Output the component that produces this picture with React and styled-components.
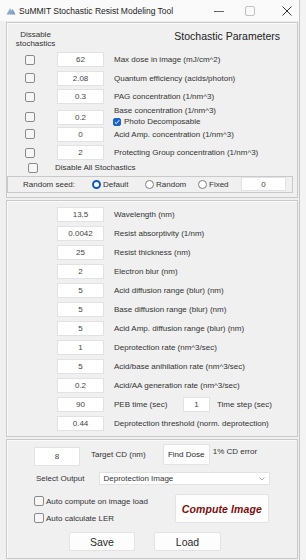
import React from "react";
import styled, { createGlobalStyle } from "styled-components";

const GlobalStyle = createGlobalStyle`
  html, body {
    margin: 0;
    padding: 0;
    background: #f3f3f3;
  }
  body {
    font-family: "Liberation Sans", Arial, sans-serif;
  }
`;

const Window = styled.div`
  width: 300px;
  height: 560px;
  box-sizing: border-box;
  background: #f0f0f0;
  border-right: 1px solid #c6c6c6;
  display: flex;
  flex-direction: column;
  overflow: hidden;
`;

const TitleBar = styled.div`
  height: 21px;
  flex: none;
  background: #fafafa;
  display: flex;
  align-items: center;
  padding-left: 6px;
  font-family: "Liberation Sans", Arial, sans-serif;
  font-size: 8.5px;
  color: #1c1c1c;
`;

const TitleText = styled.span`
  margin-left: 3px;
  white-space: nowrap;
`;

const WinButtons = styled.div`
  margin-left: auto;
  display: flex;
  align-items: center;
  gap: ${(p) => p.$gap || 22}px;
  padding-right: 7px;
`;

const Body = styled.div`
  flex: 1;
  display: flex;
  flex-direction: column;
  gap: 2px;
  padding: 1px 0 0 6px;
`;

const Frame = styled.div`
  width: 292px;
  height: ${(p) => p.$h}px;
  box-sizing: border-box;
  border: 1px solid #c9c9c9;
  box-shadow: inset 1px 1px 0 #fbfbfb;
  display: flex;
  flex-direction: column;
  padding: ${(p) => p.$pad || "0"};
`;

const Header = styled.div`
  display: flex;
  align-items: flex-start;
  padding-top: 7px;
  margin-bottom: 4px;
`;

const HeaderNote = styled.div`
  width: 57px;
  font-size: 8px;
  line-height: 9px;
  color: #333;
  text-align: center;
`;

const HeaderTitle = styled.div`
  margin-left: auto;
  padding-right: 17px;
  font-size: 10.5px;
  line-height: 12px;
  color: #222;
`;

const RowList = styled.div`
  display: flex;
  flex-direction: column;
  gap: ${(p) => p.$gap}px;
`;

const ParamRow = styled.div`
  display: grid;
  grid-template-columns: 50px 57px 1fr;
  height: 15px;
  align-items: center;
`;

const CheckCell = styled.div`
  display: flex;
  justify-content: center;
  padding-right: 4px;
`;

const NumInput = styled.input`
  width: ${(p) => p.$w || 47}px;
  height: ${(p) => p.$h || 15}px;
  box-sizing: border-box;
  border: 1px solid #e2e2e2;
  background: #fff;
  padding: 0;
  margin: 0;
  font-family: "Liberation Sans", Arial, sans-serif;
  font-size: 8px;
  color: #444;
  text-align: center;
  outline: none;
`;

const Label = styled.span`
  font-size: 8px;
  line-height: 9px;
  color: #333;
  white-space: nowrap;
`;

const StackCell = styled.div`
  display: flex;
  flex-direction: column;
  align-self: start;
  margin-top: -2px;
  gap: 2px;
`;

const InlineCheck = styled.label`
  display: flex;
  align-items: center;
  gap: ${(p) => p.$gap || 2}px;
  margin-left: ${(p) => p.$ml || 0}px;
`;

const CheckBox = styled.span`
  display: inline-flex;
  align-items: center;
  justify-content: center;
  flex: none;
  width: ${(p) => p.$size}px;
  height: ${(p) => p.$size}px;
  box-sizing: border-box;
  border: 1px solid ${(p) => (p.$checked ? "#1864c8" : "#8a8a8a")};
  background: ${(p) => (p.$checked ? "#1864c8" : "#f6f6f6")};
  border-radius: 2px;
`;

const PairCell = styled.div`
  display: flex;
  align-items: center;
`;

const DisableRow = styled.div`
  display: flex;
  align-items: center;
  height: 11px;
  margin-top: 2px;
  padding-left: 21px;
  gap: 17px;
`;

const SeedBox = styled.div`
  margin: 2.5px 4px 0 0;
  height: 17px;
  box-sizing: border-box;
  border: 1px solid #c9c9c9;
  display: grid;
  grid-template-columns: 69px 53px 53px 43px 45px;
  align-items: center;
  padding-left: 15px;
`;

const RadioItem = styled.label`
  display: flex;
  align-items: center;
  gap: 2px;
`;

const Radio = styled.span`
  width: 9px;
  height: 9px;
  box-sizing: border-box;
  border-radius: 50%;
  background: #fff;
  border: ${(p) => (p.$on ? "2.5px solid #0a5cc2" : "1px solid #7e7e7e")};
`;

const Row = styled.div`
  display: flex;
  align-items: ${(p) => p.$align || "center"};
  height: ${(p) => p.$h}px;
  margin-top: ${(p) => p.$mt || 0}px;
  padding-left: ${(p) => p.$pl || 0}px;
  gap: ${(p) => p.$gap || 0}px;
`;

const Nudge = styled.div`
  display: flex;
  margin-top: ${(p) => p.$mt || 0}px;
  margin-left: ${(p) => p.$ml || 0}px;
`;

const Button = styled.div`
  width: ${(p) => p.$w}px;
  height: ${(p) => p.$h}px;
  box-sizing: border-box;
  background: #fdfdfd;
  border: 1px solid #e3e3e3;
  border-radius: 2px;
  display: flex;
  align-items: center;
  justify-content: center;
  font-size: ${(p) => p.$fs || 8}px;
  color: #2a2a2a;
  margin-left: ${(p) => p.$ml || 0}px;
  flex: none;
`;

const ComputeButton = styled(Button)`
  font-weight: bold;
  font-style: italic;
  color: #7c0d0d;
  letter-spacing: 0.1px;
`;

const Dropdown = styled.div`
  width: 171px;
  height: 13px;
  box-sizing: border-box;
  margin-left: 15px;
  background: #fff;
  border: 1px solid #e2e2e2;
  display: flex;
  align-items: center;
  justify-content: space-between;
  padding: 0 4px 0 3px;
  font-size: 8px;
  color: #333;
`;

const CheckColumn = styled.div`
  display: flex;
  flex-direction: column;
  gap: 7px;
  margin-top: 2px;
`;

const Check = ({ checked, size = 10 }) => (
  <CheckBox $checked={checked} $size={size}>
    {checked && (
      <svg width="6" height="6" viewBox="0 0 8 8">
        <path d="M1 4.2 L3.1 6.2 L7 1.6" fill="none" stroke="#fff" strokeWidth="1.3" />
      </svg>
    )}
  </CheckBox>
);

const stochRows = [
  ["62", "Max dose in image (mJ/cm^2)"],
  ["2.08", "Quantum efficiency (acids/photon)"],
  ["0.3", "PAG concentration (1/nm^3)"],
  ["0.2", "Base concentration (1/nm^3)", true],
  ["0", "Acid Amp. concentration (1/nm^3)"],
  ["2", "Protecting Group concentration (1/nm^3)"],
];

const physRows = [
  ["13.5", "Wavelength (nm)"],
  ["0.0042", "Resist absorptivity (1/nm)"],
  ["25", "Resist thickness (nm)"],
  ["2", "Electron blur (nm)"],
  ["5", "Acid diffusion range (blur) (nm)"],
  ["5", "Base diffusion range (blur) (nm)"],
  ["5", "Acid Amp. diffusion range (blur) (nm)"],
  ["1", "Deprotection rate (nm^3/sec)"],
  ["5", "Acid/base anihilation rate (nm^3/sec)"],
  ["0.2", "Acid/AA generation rate (nm^3/sec)"],
  ["90", "PEB time (sec)", "peb"],
  ["0.44", "Deprotection threshold (norm. deprotection)"],
];

const AppIcon = () => (
  <svg width="10" height="9" viewBox="0 0 10 9">
    <defs>
      <linearGradient id="ic" x1="0" y1="0" x2="1" y2="1">
        <stop offset="0" stopColor="#a9c4e0" />
        <stop offset="1" stopColor="#6f93b8" />
      </linearGradient>
    </defs>
    <path d="M0.5 8.5 L4 2 L5.5 4.5 L6.8 2.8 L9.5 8.5 Z" fill="url(#ic)" />
  </svg>
);

export default function App() {
  return (
    <>
      <GlobalStyle />
      <Window>
        <TitleBar>
          <AppIcon />
          <TitleText>SuMMIT Stochastic Resist Modeling Tool</TitleText>
          <WinButtons $gap={21}>
            <svg width="10" height="10" viewBox="0 0 10 10">
              <line x1="0" y1="5.5" x2="10" y2="5.5" stroke="#666" strokeWidth="1" />
            </svg>
            <svg width="10" height="10" viewBox="0 0 10 10">
              <rect x="0.5" y="0.5" width="9" height="9" rx="1.5" fill="none" stroke="#c2c2c2" strokeWidth="1" />
            </svg>
            <svg width="10" height="10" viewBox="0 0 10 10" style={{ marginLeft: 6 }}>
              <path d="M0.5 0.5 L9.5 9.5 M9.5 0.5 L0.5 9.5" stroke="#333" strokeWidth="1" />
            </svg>
          </WinButtons>
        </TitleBar>

        <Body>
          <Frame $h={176}>
            <Header>
              <HeaderNote>
                Dissable
                <br />
                stochastics
              </HeaderNote>
              <HeaderTitle>Stochastic Parameters</HeaderTitle>
            </Header>
            <RowList $gap={3.7}>
              {stochRows.map(([v, text, photo]) => (
                <ParamRow key={text}>
                  <CheckCell>
                    <Check />
                  </CheckCell>
                  <NumInput value={v} readOnly />
                  {photo ? (
                    <StackCell>
                      <Label>{text}</Label>
                      <InlineCheck $ml={-1} $gap={3}>
                        <Check checked size={8} />
                        <Label>Photo Decomposable</Label>
                      </InlineCheck>
                    </StackCell>
                  ) : (
                    <Label>{text}</Label>
                  )}
                </ParamRow>
              ))}
            </RowList>
            <DisableRow>
              <Check />
              <Label>Disable All Stochastics</Label>
            </DisableRow>
            <SeedBox>
              <Label>Random seed:</Label>
              <RadioItem>
                <Radio $on />
                <Label>Default</Label>
              </RadioItem>
              <RadioItem>
                <Radio />
                <Label>Random</Label>
              </RadioItem>
              <RadioItem>
                <Radio />
                <Label>Fixed</Label>
              </RadioItem>
              <NumInput value="0" readOnly $w={45} $h={14} />
            </SeedBox>
          </Frame>

          <Frame $h={237} $pad="6px 0 0 0">
            <RowList $gap={4}>
              {physRows.map(([v, text, peb]) => (
                <ParamRow key={text}>
                  <span />
                  <NumInput value={v} readOnly />
                  {peb ? (
                    <PairCell>
                      <Label style={{ width: 69 }}>{text}</Label>
                      <NumInput value="1" readOnly $w={27} />
                      <Label style={{ marginLeft: 7 }}>Time step (sec)</Label>
                    </PairCell>
                  ) : (
                    <Label>{text}</Label>
                  )}
                </ParamRow>
              ))}
            </RowList>
          </Frame>

          <Frame $h={120} $pad="0 0 0 0">
            <Row $h={23} $mt={4} $pl={27} $align="flex-start">
              <Nudge $mt={3}>
                <NumInput value="8" readOnly $w={46} $h={19} />
              </Nudge>
              <Nudge $mt={6} $ml={11}>
                <Label>Target CD (nm)</Label>
              </Nudge>
              <Button $w={47} $h={21} $ml={17}>
                Find Dose
              </Button>
              <Nudge $mt={3} $ml={3}>
                <Label>1% CD error</Label>
              </Nudge>
            </Row>
            <Row $h={13} $mt={5} $pl={29}>
              <Label>Select Output</Label>
              <Dropdown>
                <span>Deprotection Image</span>
                <svg width="6" height="4" viewBox="0 0 6 4">
                  <path d="M0.5 0.5 L3 3 L5.5 0.5" fill="none" stroke="#999" strokeWidth="0.8" />
                </svg>
              </Dropdown>
            </Row>
            <Row $h={29} $mt={9} $pl={27} $align="flex-start">
              <CheckColumn>
                <InlineCheck>
                  <Check />
                  <Label>Auto compute on image load</Label>
                </InlineCheck>
                <InlineCheck>
                  <Check />
                  <Label>Auto calculate LER</Label>
                </InlineCheck>
              </CheckColumn>
              <ComputeButton $w={94} $h={29} $fs={10.5} $ml={27}>
                Compute Image
              </ComputeButton>
            </Row>
            <Row $h={19} $mt={9} $pl={62} $gap={19}>
              <Button $w={66} $h={19} $fs={10.5}>
                Save
              </Button>
              <Button $w={67} $h={19} $fs={10.5}>
                Load
              </Button>
            </Row>
          </Frame>
        </Body>
      </Window>
    </>
  );
}
